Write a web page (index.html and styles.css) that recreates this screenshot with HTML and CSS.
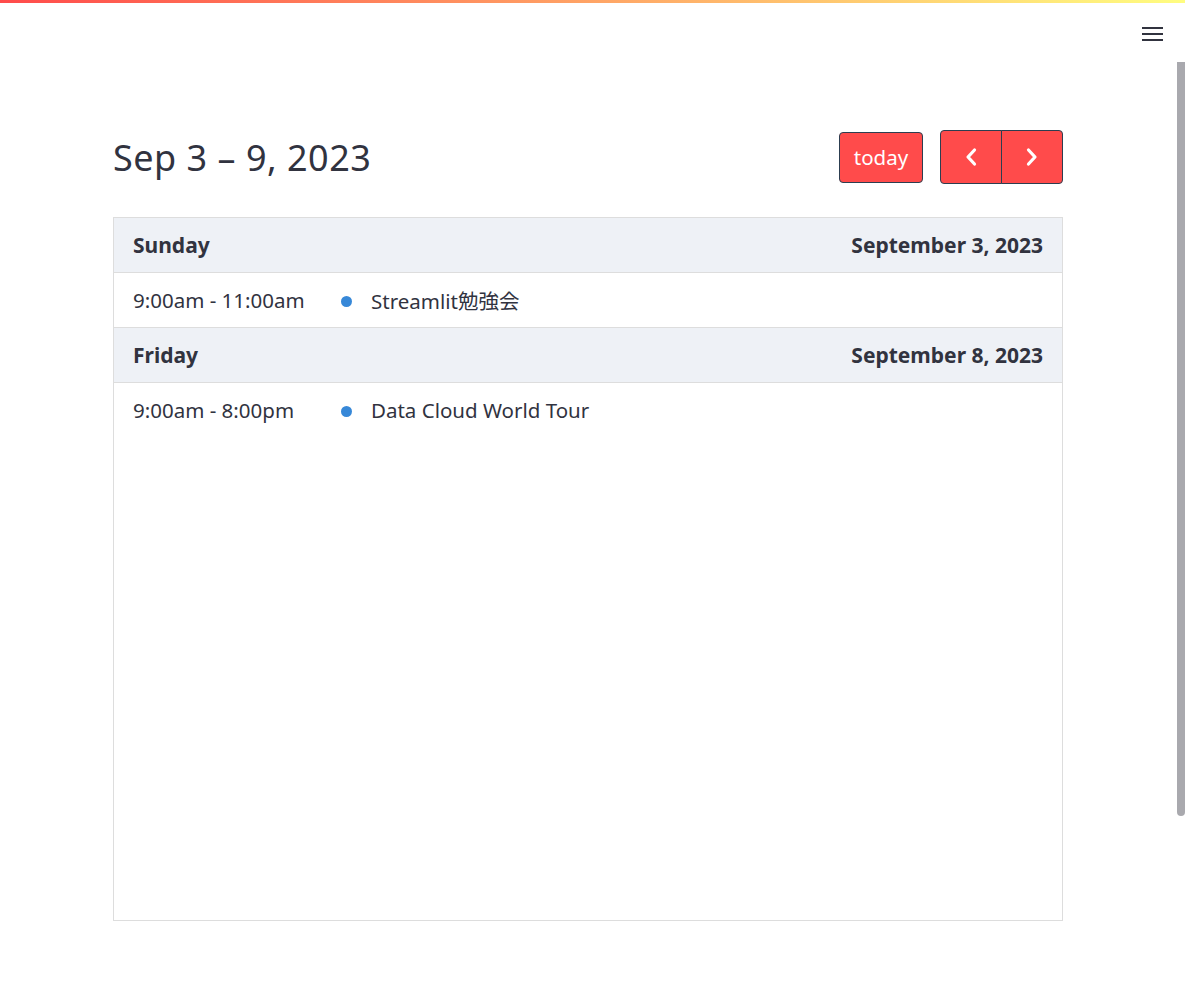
FILE: index.html
```html
<!DOCTYPE html>
<html>
<head>
<meta charset="utf-8">
<link rel="stylesheet" href="styles.css">
</head>
<body>
<div class="decoration"></div>
<div class="topbar">
  <button class="menu" aria-label="menu">
    <span></span><span></span><span></span>
  </button>
</div>
<div class="scrollthumb"></div>
<main class="page">
  <div class="calendar">
    <div class="toolbar">
      <h2 class="title">Sep 3 – 9, 2023</h2>
      <div class="actions">
        <button class="btn btn-today">today</button>
        <div class="btn-group">
          <button class="btn btn-nav" aria-label="prev">
            <svg width="14" height="20" viewBox="0 0 14 20"><path d="M10.5 3 L4 10 L10.5 17" fill="none" stroke="#fff" stroke-width="3.2" stroke-linecap="round" stroke-linejoin="round"/></svg>
          </button>
          <button class="btn btn-nav" aria-label="next">
            <svg width="14" height="20" viewBox="0 0 14 20"><path d="M3.5 3 L10 10 L3.5 17" fill="none" stroke="#fff" stroke-width="3.2" stroke-linecap="round" stroke-linejoin="round"/></svg>
          </button>
        </div>
      </div>
    </div>
    <div class="list">
      <div class="day-row">
        <span class="day-name">Sunday</span>
        <span class="day-date">September 3, 2023</span>
      </div>
      <div class="event-row">
        <span class="ev-time">9:00am - 11:00am</span>
        <span class="ev-dot"></span>
        <span class="ev-title">Streamlit勉強会</span>
      </div>
      <div class="day-row">
        <span class="day-name">Friday</span>
        <span class="day-date">September 8, 2023</span>
      </div>
      <div class="event-row">
        <span class="ev-time">9:00am - 8:00pm</span>
        <span class="ev-dot"></span>
        <span class="ev-title">Data Cloud World Tour</span>
      </div>
    </div>
  </div>
</main>
</body>
</html>
```
FILE: styles.css
```css
html, body {
  margin: 0;
  padding: 0;
  background: #ffffff;
}
body {
  font-family: "Noto Sans", "Noto Sans CJK JP", sans-serif;
  color: #31333f;
  height: 989px;
  overflow: hidden;
  position: relative;
}
.decoration {
  height: 3px;
  background: linear-gradient(90deg, #ff4b4b, #fffd80);
}
.topbar {
  display: flex;
  justify-content: flex-end;
  padding: 24px 22px 0 0;
  height: 35px;
}
.menu {
  border: 0;
  background: transparent;
  padding: 0;
  width: 21px;
  height: 14px;
  display: flex;
  flex-direction: column;
  justify-content: space-between;
  cursor: pointer;
}
.menu span {
  display: block;
  height: 2px;
  background: #31333f;
}
.scrollthumb {
  position: absolute;
  right: 0;
  top: 62px;
  width: 8px;
  height: 754px;
  background: #a9a9ae;
  border-radius: 0 0 4px 4px;
}
.page {
  padding: 68px 122px 0 113px;
}
.calendar {
  width: 950px;
}
.toolbar {
  display: flex;
  justify-content: space-between;
  align-items: center;
  height: 54px;
  margin-bottom: 33px;
}
.title {
  margin: 0;
  font-size: 36px;
  font-weight: 400;
  letter-spacing: 0.5px;
  color: #31333f;
}
.actions {
  display: flex;
  align-items: center;
  gap: 17px;
}
.btn {
  font-family: inherit;
  font-size: 20.5px;
  color: #fff;
  background: #ff4b4b;
  border: 1px solid #2c3e50;
  border-radius: 4px;
  cursor: pointer;
}
.btn-today {
  width: 84px;
  height: 51px;
  padding: 0;
}
.btn-group {
  display: flex;
}
.btn-nav {
  width: 62px;
  height: 54px;
  display: flex;
  align-items: center;
  justify-content: center;
  padding: 0;
}
.btn-group .btn-nav:first-child {
  border-radius: 4px 0 0 4px;
}
.btn-group .btn-nav:last-child {
  border-radius: 0 4px 4px 0;
  margin-left: -1px;
}
.list {
  border: 1px solid #dddddd;
  height: 704px;
  box-sizing: border-box;
}
.day-row {
  display: flex;
  justify-content: space-between;
  align-items: center;
  height: 54px;
  padding: 0 19px;
  background: #eef1f6;
  border-bottom: 1px solid #dddddd;
  font-weight: 700;
  font-size: 21px;
}
.event-row {
  display: flex;
  align-items: center;
  height: 54px;
  padding: 0 19px;
  border-bottom: 1px solid #dddddd;
  font-size: 20.5px;
}
.event-row:last-child {
  border-bottom: 0;
}
.ev-time {
  width: 189px;
  white-space: nowrap;
}
.ev-dot {
  width: 11px;
  height: 11px;
  border-radius: 50%;
  background: #3788d8;
  margin: 2px 19px 0 19px;
}
.ev-title {
  white-space: nowrap;
}
```
